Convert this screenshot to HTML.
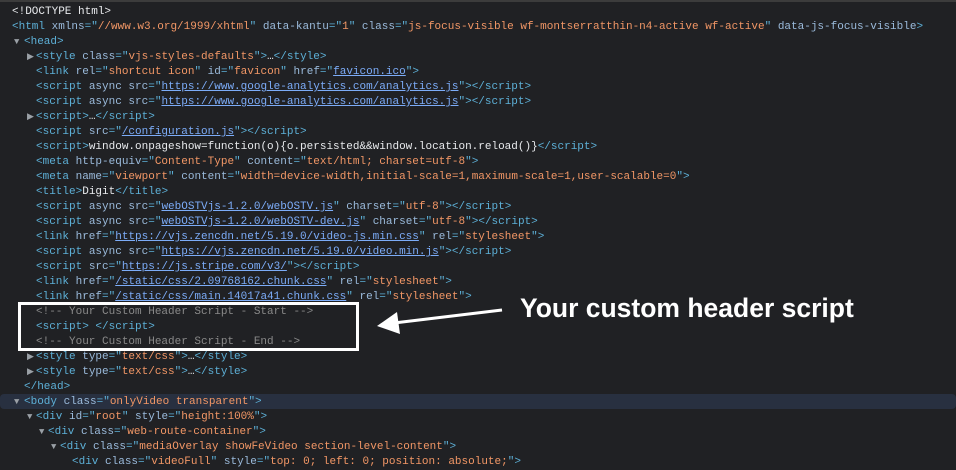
<!DOCTYPE html>
<html><head><style>
body{margin:0;width:956px;height:459px;background:#202124;overflow:hidden;position:relative;font-family:"Liberation Mono",monospace;font-size:11px;}
.top{position:absolute;left:0;top:0;width:956px;height:2px;background:#3c3c3c}
.l{position:absolute;height:15px;line-height:15px;white-space:pre;color:#e8eaed;margin-top:2px}
.t{color:#5db0d7}.a{color:#9bbbdc}.v{color:#f29766}.u{color:#7cacf8;text-decoration:underline}.c{color:#898989}
.tri{position:absolute;color:#9aa0a6;font-size:9px;line-height:15px;margin-top:2px}
.hl{position:absolute;left:0;top:394px;width:956px;height:15px;background:#283040;border-radius:4px}
.box{position:absolute;left:18px;top:302px;width:335px;height:43px;border:3px solid #fff}
.lab{position:absolute;left:520px;top:293px;font-family:"Liberation Sans",sans-serif;font-weight:bold;font-size:26.5px;color:#fff;white-space:nowrap}
</style></head><body>
<div class="top"></div>
<div class="hl"></div>
<div class="l" style="left:12px;top:3px">&lt;!DOCTYPE html&gt;</div>
<div class="l" style="left:12px;top:18px"><span class="t">&lt;html </span><span class="a">xmlns</span><span class="t">="</span><span class="v">//www.w3.org/1999/xhtml</span><span class="t">"</span> <span class="a">data-kantu</span><span class="t">="</span><span class="v">1</span><span class="t">"</span> <span class="a">class</span><span class="t">="</span><span class="v">js-focus-visible wf-montserratthin-n4-active wf-active</span><span class="t">"</span> <span class="a">data-js-focus-visible</span><span class="t">&gt;</span></div>
<div class="tri" style="left:14px;top:33px">▼</div>
<div class="l" style="left:24px;top:33px"><span class="t">&lt;head&gt;</span></div>
<div class="tri" style="left:27px;top:48px">▶</div>
<div class="l" style="left:36px;top:48px"><span class="t">&lt;style </span><span class="a">class</span><span class="t">="</span><span class="v">vjs-styles-defaults</span><span class="t">"&gt;</span>…<span class="t">&lt;/style&gt;</span></div>
<div class="l" style="left:36px;top:63px"><span class="t">&lt;link </span><span class="a">rel</span><span class="t">="</span><span class="v">shortcut icon</span><span class="t">"</span> <span class="a">id</span><span class="t">="</span><span class="v">favicon</span><span class="t">"</span> <span class="a">href</span><span class="t">="</span><span class="u">favicon.ico</span><span class="t">"&gt;</span></div>
<div class="l" style="left:36px;top:78px"><span class="t">&lt;script </span><span class="a">async src</span><span class="t">="</span><span class="u">https://www.google-analytics.com/analytics.js</span><span class="t">"&gt;&lt;/script&gt;</span></div>
<div class="l" style="left:36px;top:93px"><span class="t">&lt;script </span><span class="a">async src</span><span class="t">="</span><span class="u">https://www.google-analytics.com/analytics.js</span><span class="t">"&gt;&lt;/script&gt;</span></div>
<div class="tri" style="left:27px;top:108px">▶</div>
<div class="l" style="left:36px;top:108px"><span class="t">&lt;script&gt;</span>…<span class="t">&lt;/script&gt;</span></div>
<div class="l" style="left:36px;top:123px"><span class="t">&lt;script </span><span class="a">src</span><span class="t">="</span><span class="u">/configuration.js</span><span class="t">"&gt;&lt;/script&gt;</span></div>
<div class="l" style="left:36px;top:138px"><span class="t">&lt;script&gt;</span>window.onpageshow=function(o){o.persisted&amp;&amp;window.location.reload()}<span class="t">&lt;/script&gt;</span></div>
<div class="l" style="left:36px;top:153px"><span class="t">&lt;meta </span><span class="a">http-equiv</span><span class="t">="</span><span class="v">Content-Type</span><span class="t">"</span> <span class="a">content</span><span class="t">="</span><span class="v">text/html; charset=utf-8</span><span class="t">"&gt;</span></div>
<div class="l" style="left:36px;top:168px"><span class="t">&lt;meta </span><span class="a">name</span><span class="t">="</span><span class="v">viewport</span><span class="t">"</span> <span class="a">content</span><span class="t">="</span><span class="v">width=device-width,initial-scale=1,maximum-scale=1,user-scalable=0</span><span class="t">"&gt;</span></div>
<div class="l" style="left:36px;top:183px"><span class="t">&lt;title&gt;</span>Digit<span class="t">&lt;/title&gt;</span></div>
<div class="l" style="left:36px;top:198px"><span class="t">&lt;script </span><span class="a">async src</span><span class="t">="</span><span class="u">webOSTVjs-1.2.0/webOSTV.js</span><span class="t">"</span> <span class="a">charset</span><span class="t">="</span><span class="v">utf-8</span><span class="t">"&gt;&lt;/script&gt;</span></div>
<div class="l" style="left:36px;top:213px"><span class="t">&lt;script </span><span class="a">async src</span><span class="t">="</span><span class="u">webOSTVjs-1.2.0/webOSTV-dev.js</span><span class="t">"</span> <span class="a">charset</span><span class="t">="</span><span class="v">utf-8</span><span class="t">"&gt;&lt;/script&gt;</span></div>
<div class="l" style="left:36px;top:228px"><span class="t">&lt;link </span><span class="a">href</span><span class="t">="</span><span class="u">https://vjs.zencdn.net/5.19.0/video-js.min.css</span><span class="t">"</span> <span class="a">rel</span><span class="t">="</span><span class="v">stylesheet</span><span class="t">"&gt;</span></div>
<div class="l" style="left:36px;top:243px"><span class="t">&lt;script </span><span class="a">async src</span><span class="t">="</span><span class="u">https://vjs.zencdn.net/5.19.0/video.min.js</span><span class="t">"&gt;&lt;/script&gt;</span></div>
<div class="l" style="left:36px;top:258px"><span class="t">&lt;script </span><span class="a">src</span><span class="t">="</span><span class="u">https://js.stripe.com/v3/</span><span class="t">"&gt;&lt;/script&gt;</span></div>
<div class="l" style="left:36px;top:273px"><span class="t">&lt;link </span><span class="a">href</span><span class="t">="</span><span class="u">/static/css/2.09768162.chunk.css</span><span class="t">"</span> <span class="a">rel</span><span class="t">="</span><span class="v">stylesheet</span><span class="t">"&gt;</span></div>
<div class="l" style="left:36px;top:288px"><span class="t">&lt;link </span><span class="a">href</span><span class="t">="</span><span class="u">/static/css/main.14017a41.chunk.css</span><span class="t">"</span> <span class="a">rel</span><span class="t">="</span><span class="v">stylesheet</span><span class="t">"&gt;</span></div>
<div class="l c" style="left:36px;top:303px">&lt;!-- Your Custom Header Script - Start --&gt;</div>
<div class="l" style="left:36px;top:318px"><span class="t">&lt;script&gt; &lt;/script&gt;</span></div>
<div class="l c" style="left:36px;top:333px">&lt;!-- Your Custom Header Script - End --&gt;</div>
<div class="tri" style="left:27px;top:348px">▶</div>
<div class="l" style="left:36px;top:348px"><span class="t">&lt;style </span><span class="a">type</span><span class="t">="</span><span class="v">text/css</span><span class="t">"&gt;</span>…<span class="t">&lt;/style&gt;</span></div>
<div class="tri" style="left:27px;top:363px">▶</div>
<div class="l" style="left:36px;top:363px"><span class="t">&lt;style </span><span class="a">type</span><span class="t">="</span><span class="v">text/css</span><span class="t">"&gt;</span>…<span class="t">&lt;/style&gt;</span></div>
<div class="l" style="left:24px;top:378px"><span class="t">&lt;/head&gt;</span></div>
<div class="tri" style="left:14px;top:393px">▼</div>
<div class="l" style="left:24px;top:393px"><span class="t">&lt;body </span><span class="a">class</span><span class="t">="</span><span class="v">onlyVideo transparent</span><span class="t">"&gt;</span></div>
<div class="tri" style="left:27px;top:408px">▼</div>
<div class="l" style="left:36px;top:408px"><span class="t">&lt;div </span><span class="a">id</span><span class="t">="</span><span class="v">root</span><span class="t">"</span> <span class="a">style</span><span class="t">="</span><span class="v">height:100%</span><span class="t">"&gt;</span></div>
<div class="tri" style="left:39px;top:423px">▼</div>
<div class="l" style="left:48px;top:423px"><span class="t">&lt;div </span><span class="a">class</span><span class="t">="</span><span class="v">web-route-container</span><span class="t">"&gt;</span></div>
<div class="tri" style="left:51px;top:438px">▼</div>
<div class="l" style="left:60px;top:438px"><span class="t">&lt;div </span><span class="a">class</span><span class="t">="</span><span class="v">mediaOverlay showFeVideo section-level-content</span><span class="t">"&gt;</span></div>
<div class="l" style="left:72px;top:453px"><span class="t">&lt;div </span><span class="a">class</span><span class="t">="</span><span class="v">videoFull</span><span class="t">"</span> <span class="a">style</span><span class="t">="</span><span class="v">top: 0; left: 0; position: absolute;</span><span class="t">"&gt;</span></div>
<div class="box"></div>
<svg style="position:absolute;left:0;top:0" width="956" height="459"><line x1="502" y1="310" x2="394" y2="323" stroke="#fff" stroke-width="3"/><polygon points="377,326 397,312 400,334" fill="#fff"/></svg>
<div class="lab">Your custom header script</div>
</body></html>
